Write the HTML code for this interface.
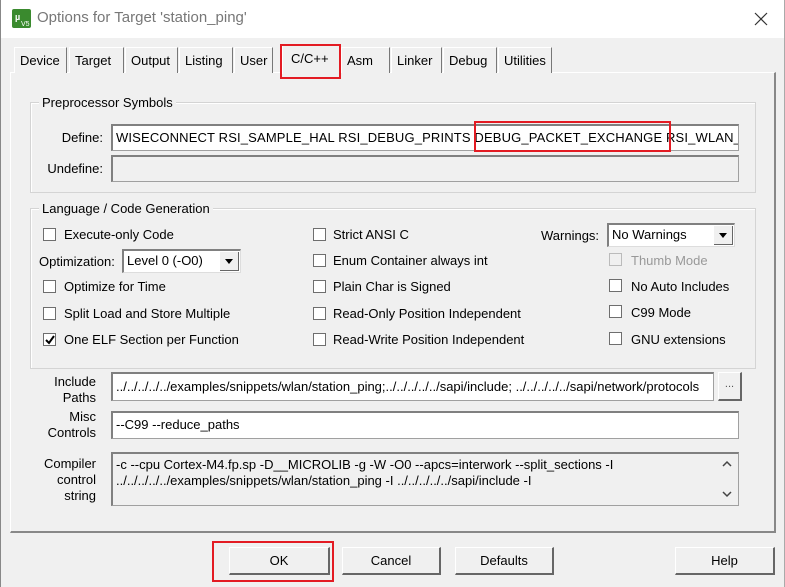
<!DOCTYPE html>
<html><head><style>
*{box-sizing:border-box;margin:0;padding:0}
body{width:785px;height:587px;overflow:hidden;background:#f0f0f0;font-family:"Liberation Sans",sans-serif;font-size:13px;color:#000;position:relative}
.a{position:absolute;white-space:nowrap}
.title{left:0;top:0;width:785px;height:38px;background:#fff;border-left:1px solid #888;}
.tab{position:absolute;top:47px;height:26px;background:#f0f0f0;border:1px solid #fff;border-right:1px solid #777;border-bottom:none;padding:5px 0 0 5px;font-size:13px}
.panel{left:10px;top:72px;width:766px;height:461px;border:1px solid #fff;border-right:2px solid #888;border-bottom:2px solid #888;background:#f0f0f0}
.grp{position:absolute;border:1px solid #d4d4d4;box-shadow:1px 1px 0 #fff inset}
.grpl{position:absolute;background:#f0f0f0;padding:0 3px}
.fld{position:absolute;background:#fff;border:1px solid #a0a0a0;border-top:2px solid #808080;border-left:2px solid #808080;padding:2px 3px;overflow:hidden;white-space:nowrap}
.dis{background:#f0f0f0}
.cb{position:absolute;width:13px;height:13px;border:1px solid #6e6e6e;background:#fff}
.btn{position:absolute;height:28px;border:1px solid #fff;border-right:2px solid #666;border-bottom:2px solid #666;background:#f0f0f0;text-align:center;line-height:25px;font-size:13px}
.red{position:absolute;border:2px solid #e31b23}
.cmb{position:absolute;height:24px;background:#fff;border:2px solid #808080;border-right:1px solid #ddd;border-bottom:1px solid #ddd;padding:2px 3px;white-space:nowrap}
.arr{position:absolute;right:1px;top:1px;width:19px;height:19px;background:#f0f0f0;border-right:1px solid #666;border-bottom:1px solid #666}
.arr:after{content:"";position:absolute;left:5px;top:7px;border-left:4px solid transparent;border-right:4px solid transparent;border-top:5px solid #000}
.r{text-align:right}
</style></head><body>
<div class="a title"></div>
<div class="a" style="left:0;top:0;width:1px;height:587px;background:#888"></div>
<div class="a" style="left:784px;top:0;width:1px;height:587px;background:#aaa"></div>
<svg class="a" style="left:12px;top:9px" width="19" height="19"><rect width="19" height="19" rx="2" fill="#3a8a2e"/><text x="3" y="11" font-size="9" fill="#fff" font-family="Liberation Sans" font-weight="bold">µ</text><text x="9" y="17" font-size="7" fill="#fff" font-family="Liberation Sans">V5</text></svg>
<div class="a" style="left:37px;top:9px;font-size:15px;color:#777">Options for Target 'station_ping'</div>
<svg class="a" style="left:754px;top:12px" width="14" height="14"><path d="M1 1L13 13M13 1L1 13" stroke="#333" stroke-width="1.2"/></svg>

<div class="a panel"></div>
<div class="tab" style="left:14px;width:53px">Device</div>
<div class="tab" style="left:69px;width:55px">Target</div>
<div class="tab" style="left:125px;width:53px">Output</div>
<div class="tab" style="left:179px;width:54px">Listing</div>
<div class="tab" style="left:234px;width:39px">User</div>
<div class="tab" style="left:282px;top:44px;height:30px;width:58px;padding:6px 0 0 8px;border-bottom:none">C/C++</div>
<div class="tab" style="left:341px;width:49px">Asm</div>
<div class="tab" style="left:391px;width:51px">Linker</div>
<div class="tab" style="left:443px;width:54px">Debug</div>
<div class="tab" style="left:498px;width:54px">Utilities</div>
<div class="red" style="left:280px;top:44px;width:61px;height:35px"></div>

<div class="grp" style="left:30px;top:102px;width:726px;height:91px"></div>
<div class="grpl" style="left:39px;top:95px">Preprocessor Symbols</div>
<div class="a r" style="left:40px;top:130px;width:63px">Define:</div>
<div class="fld" style="left:111px;top:124px;width:628px;height:27px;padding-top:4px;letter-spacing:0.15px">WISECONNECT RSI_SAMPLE_HAL RSI_DEBUG_PRINTS DEBUG_PACKET_EXCHANGE RSI_WLAN_API_ENABLE</div>
<div class="red" style="left:474px;top:121px;width:197px;height:31px"></div>
<div class="a r" style="left:40px;top:161px;width:63px">Undefine:</div>
<div class="fld dis" style="left:111px;top:155px;width:628px;height:27px"></div>

<div class="grp" style="left:30px;top:208px;width:726px;height:161px"></div>
<div class="grpl" style="left:39px;top:201px">Language / Code Generation</div>
<div class="cb" style="left:43px;top:228px"></div><div class="a" style="left:64px;top:227px">Execute-only Code</div>
<div class="a" style="left:39px;top:254px">Optimization:</div>
<div class="cmb" style="left:122px;top:249px;width:119px">Level 0 (-O0)<div class="arr"></div></div>
<div class="cb" style="left:43px;top:280px"></div><div class="a" style="left:64px;top:279px">Optimize for Time</div>
<div class="cb" style="left:43px;top:307px"></div><div class="a" style="left:64px;top:306px">Split Load and Store Multiple</div>
<div class="cb" style="left:43px;top:333px"></div><svg class="a" style="left:45px;top:335px" width="10" height="10"><path d="M1 5L4 8L9 1" stroke="#000" stroke-width="2" fill="none"/></svg><div class="a" style="left:64px;top:332px">One ELF Section per Function</div>

<div class="cb" style="left:313px;top:228px"></div><div class="a" style="left:333px;top:227px">Strict ANSI C</div>
<div class="cb" style="left:313px;top:254px"></div><div class="a" style="left:333px;top:253px">Enum Container always int</div>
<div class="cb" style="left:313px;top:280px"></div><div class="a" style="left:333px;top:279px">Plain Char is Signed</div>
<div class="cb" style="left:313px;top:307px"></div><div class="a" style="left:333px;top:306px">Read-Only Position Independent</div>
<div class="cb" style="left:313px;top:333px"></div><div class="a" style="left:333px;top:332px">Read-Write Position Independent</div>

<div class="a" style="left:541px;top:228px">Warnings:</div>
<div class="cmb" style="left:607px;top:223px;width:128px">No Warnings<div class="arr"></div></div>
<div class="cb" style="left:609px;top:253px;border-color:#bbb;background:#f0f0f0"></div><div class="a" style="left:631px;top:253px;color:#999">Thumb Mode</div>
<div class="cb" style="left:609px;top:279px"></div><div class="a" style="left:631px;top:279px">No Auto Includes</div>
<div class="cb" style="left:609px;top:305px"></div><div class="a" style="left:631px;top:305px">C99 Mode</div>
<div class="cb" style="left:609px;top:332px"></div><div class="a" style="left:631px;top:332px">GNU extensions</div>

<div class="a r" style="left:30px;top:374px;width:66px;line-height:16px">Include<br>Paths</div>
<div class="fld" style="left:111px;top:372px;width:603px;height:29px;padding-top:5px">../../../../../examples/snippets/wlan/station_ping;../../../../../sapi/include; ../../../../../sapi/network/protocols</div>
<div class="btn" style="left:718px;top:372px;width:24px;height:29px;line-height:22px;font-size:11px;color:#555">...</div>
<div class="a r" style="left:30px;top:409px;width:66px;line-height:16px">Misc<br>Controls</div>
<div class="fld" style="left:111px;top:411px;width:628px;height:28px;padding-top:4px">--C99 --reduce_paths</div>
<div class="a r" style="left:30px;top:456px;width:66px;line-height:16px">Compiler<br>control<br>string</div>
<div class="fld dis" style="left:111px;top:452px;width:628px;height:54px;padding-top:3px;line-height:16px">-c --cpu Cortex-M4.fp.sp -D__MICROLIB -g -W -O0 --apcs=interwork --split_sections -I<br>../../../../../examples/snippets/wlan/station_ping -I ../../../../../sapi/include -I</div>
<div class="a" style="left:716px;top:454px;width:21px;height:50px;background:#f0f0f0"></div>
<svg class="a" style="left:721px;top:459px" width="12" height="40"><path d="M2 7L6 3L10 7M2 33L6 37L10 33" stroke="#444" stroke-width="1.5" fill="none"/></svg>

<div class="btn" style="left:229px;top:547px;width:101px">OK</div>
<div class="btn" style="left:342px;top:547px;width:99px">Cancel</div>
<div class="btn" style="left:455px;top:547px;width:99px">Defaults</div>
<div class="btn" style="left:675px;top:547px;width:100px">Help</div>
<div class="red" style="left:212px;top:541px;width:122px;height:41px"></div>
</body></html>
